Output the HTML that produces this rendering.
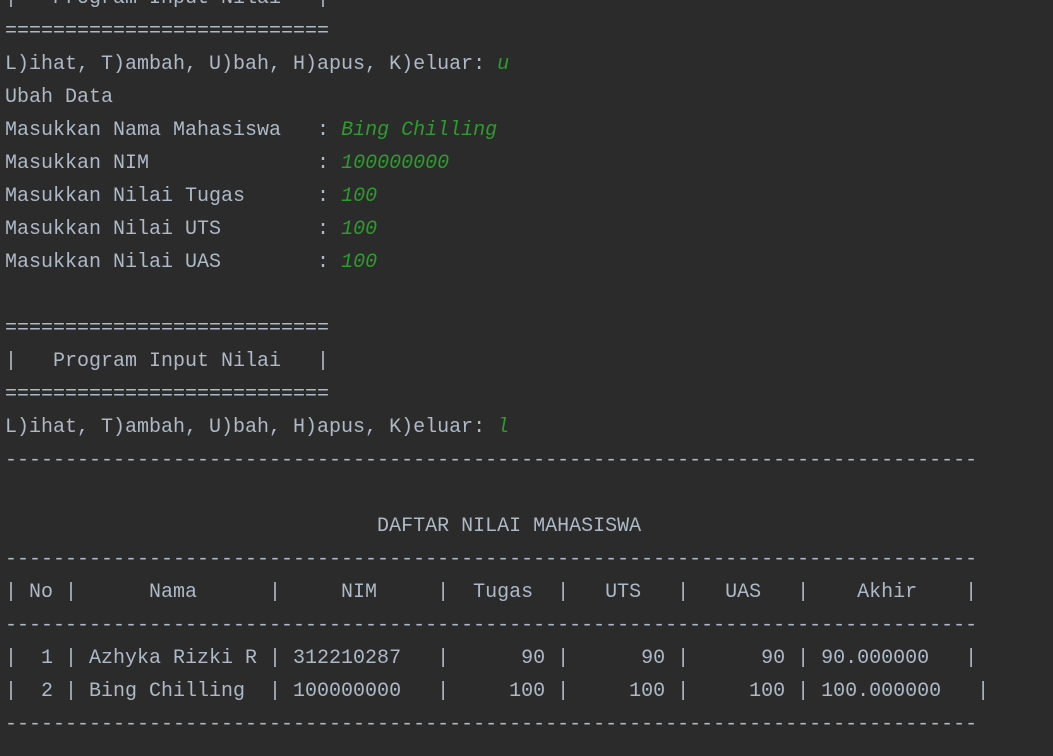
<!DOCTYPE html>
<html><head><meta charset="utf-8"><style>
html,body{margin:0;padding:0;background:#2b2b2b;width:1053px;height:756px;overflow:hidden}
pre{margin:0;position:absolute;left:5px;top:-18px;font-family:"Liberation Mono","DejaVu Sans Mono",monospace;font-size:20px;line-height:33px;color:#adb9c6;letter-spacing:0}
i{color:#2f9a2f;font-style:italic}
</style></head><body><pre>|   Program Input Nilai   |
===========================
L)ihat, T)ambah, U)bah, H)apus, K)eluar: <i>u</i>
Ubah Data
Masukkan Nama Mahasiswa   : <i>Bing Chilling</i>
Masukkan NIM              : <i>100000000</i>
Masukkan Nilai Tugas      : <i>100</i>
Masukkan Nilai UTS        : <i>100</i>
Masukkan Nilai UAS        : <i>100</i>

===========================
|   Program Input Nilai   |
===========================
L)ihat, T)ambah, U)bah, H)apus, K)eluar: <i>l</i>
---------------------------------------------------------------------------------

                               DAFTAR NILAI MAHASISWA
---------------------------------------------------------------------------------
| No |      Nama      |     NIM     |  Tugas  |   UTS   |   UAS   |    Akhir    |
---------------------------------------------------------------------------------
|  1 | Azhyka Rizki R | 312210287   |      90 |      90 |      90 | 90.000000   |
|  2 | Bing Chilling  | 100000000   |     100 |     100 |     100 | 100.000000   |
---------------------------------------------------------------------------------
</pre></body></html>
